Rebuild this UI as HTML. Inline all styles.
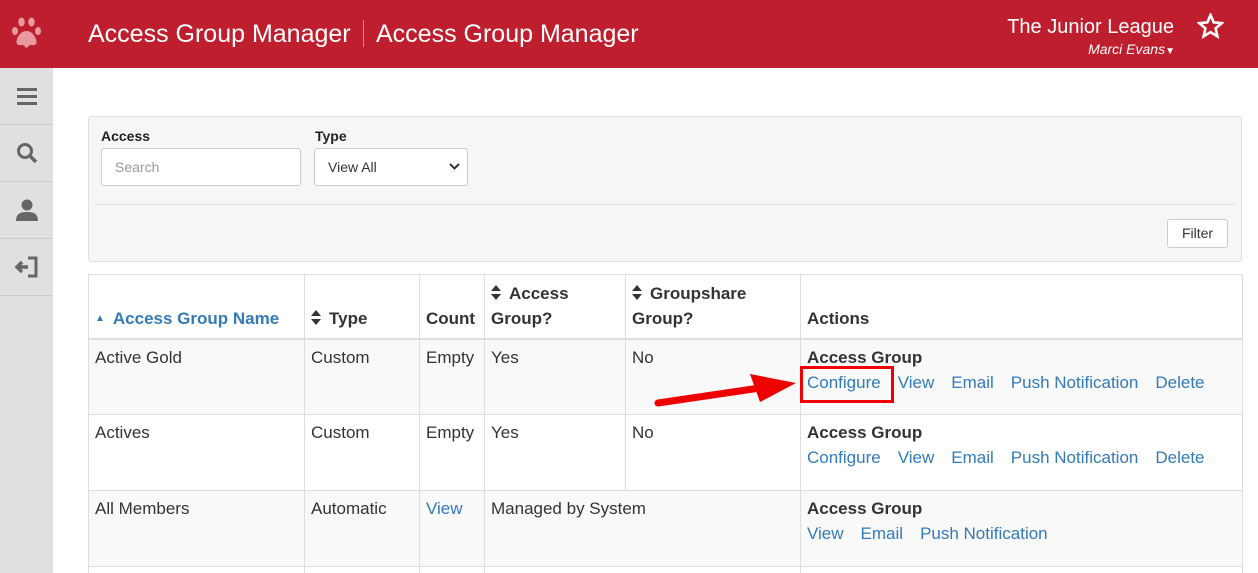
<!DOCTYPE html>
<html><head><style>
*{box-sizing:border-box;margin:0;padding:0}
html,body{width:1258px;height:573px;overflow:hidden}
body{background:#fff;font-family:"Liberation Sans",sans-serif;color:#333;position:relative}
.hdr{position:absolute;left:0;top:0;width:1258px;height:68px;background:#be1e2d;color:#fff}
.side{position:absolute;left:0;top:68px;width:53px;height:505px;background:#e0e0e0}
.side div{height:57px;border-bottom:1px solid #ccc;display:flex;align-items:center;justify-content:center}
.panel{position:absolute;left:88px;top:116px;width:1154px;height:146px;background:#f5f6f8;border:1px solid #dde0e4;border-radius:3px}
.lbl{position:absolute;font-size:14px;font-weight:bold;color:#222}
.inp{position:absolute;background:#fff;border:1px solid #ccc;border-radius:3px;font-size:14px;color:#999;padding:10px 13px}
table{position:absolute;left:88px;top:274px;border-collapse:collapse;font-size:17px;line-height:25px}
td,th{border:1px solid #ddd;vertical-align:top;padding:6px;padding-top:5px;text-align:left}
th{vertical-align:bottom;font-weight:bold;color:#333;border-bottom:2px solid #ddd;padding-bottom:7px;line-height:25px}
a{color:#337ab7;text-decoration:none}
.s{display:inline-block;width:11px;height:15px;position:relative;margin-right:7px;vertical-align:-1px}
.s:before{content:"";position:absolute;left:0;top:0;border:5.5px solid transparent;border-bottom:6px solid #333;border-top:0}
.s:after{content:"";position:absolute;left:0;top:9px;border:5.5px solid transparent;border-top:6px solid #333;border-bottom:0}
.act a{margin-right:17px}
</style></head><body>
<div class="hdr">
<svg style="position:absolute;left:11px;top:14px" width="32" height="38" viewBox="0 0 32 38"><g fill="#e99aa0"><ellipse cx="4" cy="17" rx="3" ry="4"/><ellipse cx="10.5" cy="8" rx="3.2" ry="4.5"/><ellipse cx="20.5" cy="8" rx="3.2" ry="4.5"/><ellipse cx="27" cy="17" rx="3" ry="4"/><path d="M15.5 17c-6 0-10 7-10 11 0 4 4 3 6 3s3 3 4 3 2-3 4-3 6 1 6-3c0-4-4-11-10-11z"/></g></svg>
<div style="position:absolute;left:88px;top:20px;font-size:25px">Access Group Manager</div>
<div style="position:absolute;left:363px;top:20px;width:1px;height:27px;background:#e88"></div>
<div style="position:absolute;left:376px;top:20px;font-size:25px">Access Group Manager</div>
<div style="position:absolute;right:84px;top:16px;font-size:20px">The Junior League</div>
<div style="position:absolute;right:83px;top:41px;font-size:14px;font-style:italic">Marci Evans<span style="font-style:normal;font-size:10px">&#9660;</span></div>
<svg style="position:absolute;left:1197px;top:13px" width="27" height="26" viewBox="0 0 27 26"><path d="M13.5 2l3.2 7.4 8 .7-6.1 5.3 1.8 7.9-6.9-4.2-6.9 4.2 1.8-7.9L2.3 10.1l8-.7z" fill="none" stroke="#fff" stroke-width="2.6" stroke-linejoin="miter"/></svg>
</div>
<div class="side">
<div><svg width="20" height="18"><rect y="1" width="20" height="3" fill="#666"/><rect y="8" width="20" height="3" fill="#666"/><rect y="15" width="20" height="3" fill="#666"/></svg></div>
<div><svg width="22" height="22"><circle cx="9" cy="9" r="6.5" stroke="#666" stroke-width="3" fill="none"/><path d="M14 14l6 6" stroke="#666" stroke-width="3.5"/></svg></div>
<div><svg width="22" height="22"><circle cx="11" cy="6" r="5.5" fill="#666"/><path d="M0 22c0-7 4-9 11-9s11 2 11 9z" fill="#666"/></svg></div>
<div><svg width="24" height="22"><path d="M13 2h8v18h-8" stroke="#666" stroke-width="3" fill="none"/><path d="M2 11h11M7 6l-5 5 5 5" stroke="#666" stroke-width="3.5" fill="none"/></svg></div>
</div>
<div class="panel">
<div class="lbl" style="left:12px;top:11px">Access</div>
<div class="inp" style="left:12px;top:31px;width:200px;height:38px">Search</div>
<div class="lbl" style="left:226px;top:11px">Type</div>
<div class="inp" style="left:225px;top:31px;width:154px;height:38px;color:#333">View All<svg style="position:absolute;right:7px;top:14px" width="11" height="8"><path d="M1 1l4.5 4.5L10 1" stroke="#333" stroke-width="2" fill="none"/></svg></div>
<div style="position:absolute;left:6px;right:6px;top:87px;height:1px;background:#ddd"></div>
<div style="position:absolute;left:1078px;top:102px;width:61px;height:29px;background:#fff;border:1px solid #ccc;border-radius:3px;font-size:14px;text-align:center;line-height:27px">Filter</div>
</div>
<table>
<tr style="height:64px"><th style="width:216px"><a><span style="font-size:10px;margin-right:8px;vertical-align:3px">&#9650;</span>Access Group Name</a></th><th style="width:115px"><span class="s"></span>Type</th><th style="width:65px">Count</th><th style="width:141px"><span class="s"></span>Access Group?</th><th style="width:175px"><span class="s"></span>Groupshare Group?</th><th style="width:442px">Actions</th></tr>
<tr style="height:76px;background:#f9f9f9"><td>Active Gold</td><td>Custom</td><td>Empty</td><td>Yes</td><td>No</td><td class="act"><b>Access Group</b><br><a>Configure</a><a>View</a><a>Email</a><a>Push Notification</a><a>Delete</a></td></tr>
<tr style="height:76px"><td>Actives</td><td>Custom</td><td>Empty</td><td>Yes</td><td>No</td><td class="act"><b>Access Group</b><br><a>Configure</a><a>View</a><a>Email</a><a>Push Notification</a><a>Delete</a></td></tr>
<tr style="height:76px;background:#f9f9f9"><td>All Members</td><td>Automatic</td><td><a>View</a></td><td colspan="2">Managed by System</td><td class="act"><b>Access Group</b><br><a>View</a><a>Email</a><a>Push Notification</a></td></tr>
<tr style="height:20px"><td></td><td></td><td></td><td colspan="2"></td><td></td></tr>
</table>
<div style="position:absolute;left:800px;top:366px;width:94px;height:37px;border:3px solid #e00"></div>
<svg style="position:absolute;left:650px;top:370px" width="150" height="40"><path d="M8 33L110 18" stroke="#e00" stroke-width="7" stroke-linecap="round"/><path d="M100 4L146 13L110 32z" fill="#e00"/></svg>
</body></html>
